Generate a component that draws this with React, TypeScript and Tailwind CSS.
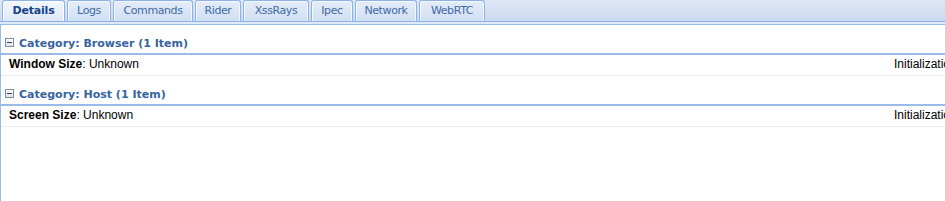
import React from "react";

const tabs = [
  { label: "Details", w: "w-[63px]", active: true },
  { label: "Logs", w: "w-[44px]" },
  { label: "Commands", w: "w-[80px]" },
  { label: "Rider", w: "w-[46px]" },
  { label: "XssRays", w: "w-[66px]" },
  { label: "Ipec", w: "w-[42px]" },
  { label: "Network", w: "w-[62px]" },
  { label: "WebRTC", w: "w-[66px]" },
];

function Minus() {
  return (
    <span className="w-[9px] h-[9px] mb-[2px] border border-[#7f8fa8] bg-gradient-to-b from-white to-[#dde4ee] flex items-center justify-center shrink-0">
      <span className="w-[5px] h-[1px] bg-[#2d3f5c]" />
    </span>
  );
}

function Group({ title, name, value }: { title: string; name: string; value: string }) {
  return (
    <div>
      <div className="h-[30px] border-b-2 border-[#99bbe8] flex items-end pb-[4px] pl-[4px] gap-[5px]">
        <Minus />
        <span className="text-[11px] leading-[13px] font-bold text-[#3764a0] font-['DejaVu_Sans',sans-serif] -mb-[1px]">
          {title}
        </span>
      </div>
      <div className="h-[21px] pb-[2px] border-b border-[#ededed] flex items-center font-['Liberation_Sans',Arial,sans-serif] text-[12px] text-black">
        <div className="flex-1 pl-[8px]">
          <span className="font-bold">{name}</span>: {value}
        </div>
        <div className="w-[51px] overflow-hidden whitespace-nowrap">Initialization</div>
      </div>
    </div>
  );
}

export default function App() {
  return (
    <div className="w-[945px] h-[201px] bg-white overflow-hidden flex flex-col">
      <div className="h-[22px] bg-gradient-to-b from-[#dfe8f6] to-[#cbdaf0] border-b border-[#8db2e3] flex items-end pl-[2px] gap-[2px] shrink-0">
        {tabs.map((t) => (
          <div
            key={t.label}
            className={
              t.active
                ? `${t.w} h-[21px] border border-b-0 border-[#8db2e3] rounded-t-[3px] bg-gradient-to-b from-[#f3f7fd] to-[#dee8f6] shadow-[inset_1px_1px_0_#ffffff,inset_-1px_0_0_#ffffff] flex items-center justify-center text-[11px] font-bold text-[#15428b] font-['DejaVu_Sans',sans-serif] tracking-[-0.2px]`
                : `${t.w} h-[21px] border border-b-0 border-[#8db2e3] rounded-t-[3px] bg-gradient-to-b from-[#e4ecf8] to-[#d0dff4] shadow-[inset_1px_1px_0_#f4f8fd,inset_-1px_0_0_#f4f8fd] flex items-center justify-center text-[11px] text-[#416aa3] font-['DejaVu_Sans',sans-serif] tracking-[-0.4px]`
            }
          >
            {t.label}
          </div>
        ))}
      </div>
      <div className="h-[2px] bg-[#dfe8f6] shrink-0" />
      <div className="flex-1 border-t border-l border-[#99bbe8]">
        <Group title="Category: Browser (1 Item)" name="Window Size" value="Unknown" />
        <Group title="Category: Host (1 Item)" name="Screen Size" value="Unknown" />
      </div>
    </div>
  );
}
